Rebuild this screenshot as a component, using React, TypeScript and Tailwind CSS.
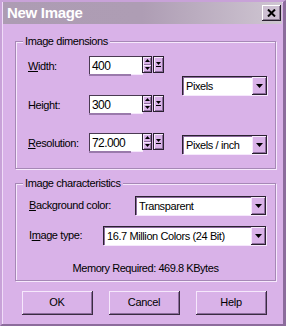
import React from "react";

const font = "font-['Liberation_Sans',Arial,sans-serif]";

function Arrow({ up = false }: { up?: boolean }) {
  return (
    <svg width="5" height="3" viewBox="0 0 5 3" className="block">
      {up ? <path d="M2.5 0 L5 3 L0 3 Z" fill="#000" /> : <path d="M0 0 L5 0 L2.5 3 Z" fill="#000" />}
    </svg>
  );
}

function Spinner({ value }: { value: string }) {
  return (
    <div className="flex items-start h-[20px]">
      <div className="flex flex-col w-[53px]">
        <div className="h-[18px] bg-white border-t border-l border-[#4a3a52] border-r-0 border-b-0 shadow-[1px_1px_0_#f6e8fc] flex items-center pl-[2px] text-[12px] tracking-[-0.6px] text-black">
          {value}
        </div>
        <div className="h-[2px] w-[42px] bg-[#9a7aab]" />
      </div>
      <div className="flex flex-col w-[10px] h-[17px] border border-[#2a2030]">
        <div className="flex-1 flex items-center justify-center bg-[#d9b2e8] shadow-[inset_1px_1px_0_#f6e8fc,inset_-1px_-1px_0_#8c6c9c]">
          <Arrow up />
        </div>
        <div className="flex-1 flex items-center justify-center bg-[#d9b2e8] shadow-[inset_1px_1px_0_#f6e8fc,inset_-1px_-1px_0_#8c6c9c]">
          <Arrow />
        </div>
      </div>
      <div className="w-[11px] h-[17px] ml-[1px] border border-[#2a2030] bg-[#d9b2e8] shadow-[inset_1px_1px_0_#f6e8fc,inset_-1px_-1px_0_#8c6c9c] flex flex-col items-center justify-center gap-[1px]">
        <Arrow />
        <div className="w-[5px] h-[1px] bg-black" />
      </div>
    </div>
  );
}

function Select({ value, width }: { value: string; width: string }) {
  return (
    <div
      className={`${width} h-[19px] bg-white border-t border-l border-[#2a2030] shadow-[1px_1px_0_#f6e8fc,inset_1px_1px_0_#8c6c9c] flex items-stretch`}
    >
      <div className="flex-1 flex items-center pl-[3px] text-[11px] tracking-[-0.4px] text-black">{value}</div>
      <div className="w-[15px] bg-[#d9b2e8] border-r border-b border-[#2a2030] shadow-[inset_1px_1px_0_#f6e8fc,inset_-1px_-1px_0_#8c6c9c] flex items-center justify-center">
        <svg width="7" height="4" viewBox="0 0 7 4">
          <path d="M0 0 L7 0 L3.5 4 Z" fill="#000" />
        </svg>
      </div>
    </div>
  );
}

function Label({ pre = "", hot = "", rest, width }: { pre?: string; hot?: string; rest: string; width: string }) {
  return (
    <div className={`${width} text-[11px] tracking-[-0.4px] text-black`}>
      {pre}
      {hot && <span className="underline underline-offset-[1px]">{hot}</span>}
      {rest}
    </div>
  );
}

function Group({ title, height, children }: { title: string; height: string; children: React.ReactNode }) {
  return (
    <div
      className={`relative ml-[15px] w-[261px] ${height} border border-[#a688b6] shadow-[inset_1px_1px_0_#f6e8fc,1px_1px_0_#f6e8fc]`}
    >
      <span className="absolute -top-[7px] left-[7px] px-[2px] bg-[#d9b2e8] text-[11px] leading-[13px] tracking-[-0.4px] text-black">
        {title}
      </span>
      {children}
    </div>
  );
}

function Button({ label }: { label: string }) {
  return (
    <div className="w-[71px] h-[24px] border-r border-b border-[#3a2c42] bg-[#d9b2e8] shadow-[inset_1px_1px_0_#f6e8fc,inset_-1px_-1px_0_#8c6c9c] flex items-center justify-center text-[11px] tracking-[-0.3px] text-black">
      {label}
    </div>
  );
}

export default function App() {
  return (
    <div
      className={`${font} w-[286px] h-[326px] bg-[#d9b2e8] border-l-[2px] border-t-[2px] border-r-[3px] border-b-[2px] border-l-[#c8a2d8] border-t-[#c8a2d8] border-r-[#8c6c9c] border-b-[#8c6c9c] shadow-[inset_1px_1px_0_#f0dcf8] flex flex-col select-none`}
    >
      {/* Title bar */}
      <div className="mx-[1px] h-[22px] flex items-center justify-between bg-gradient-to-r from-[#ad9cb3] via-[#ae9db4] to-[#cfc6d2]">
        <span className="pl-[4px] text-[15px] font-bold text-white tracking-[-0.3px]">New Image</span>
        <div className="mr-[1px] w-[19px] h-[16px] bg-[#cdbfd2] border-r border-b border-[#2a2030] shadow-[inset_1px_1px_0_#ffffff,inset_-1px_-1px_0_#8c7c94] flex items-center justify-center">
          <svg width="9" height="8" viewBox="0 0 9 8">
            <path d="M1 0.5 L8 7.5 M8 0.5 L1 7.5" stroke="#000" strokeWidth="2" />
          </svg>
        </div>
      </div>

      {/* Image dimensions */}
      <div className="mt-[17px] -ml-[2px]">
        <Group title="Image dimensions" height="h-[128px]">
          <div className="flex pt-[14px] pl-[12px]">
            <div className="flex flex-col gap-[19px]">
              <div className="flex items-center h-[20px]">
                <Label hot="W" rest="idth:" width="w-[61px]" />
                <Spinner value="400" />
              </div>
              <div className="flex items-center h-[20px]">
                <Label rest="Height:" width="w-[61px]" />
                <Spinner value="300" />
              </div>
              <div className="flex items-center h-[20px] -mt-[1px]">
                <Label hot="R" rest="esolution:" width="w-[61px]" />
                <Spinner value="72.000" />
              </div>
            </div>
            <div className="flex flex-col ml-[18px] pt-[20px] gap-[40px]">
              <Select value="Pixels" width="w-[85px]" />
              <Select value="Pixels / inch" width="w-[85px]" />
            </div>
          </div>
        </Group>
      </div>

      {/* Image characteristics */}
      <div className="mt-[14px] -ml-[2px]">
        <Group title="Image characteristics" height="h-[98px]">
          <div className="flex flex-col pt-[12px] pl-[13px]">
            <div className="flex items-center h-[19px]">
              <Label hot="B" rest="ackground color:" width="w-[106px]" />
              <Select value="Transparent" width="w-[131px]" />
            </div>
            <div className="flex items-center h-[19px] mt-[11px]">
              <Label pre="I" hot="m" rest="age type:" width="w-[74px]" />
              <Select value="16.7 Million Colors (24 Bit)" width="w-[163px]" />
            </div>
            <div className="mt-[15px] pr-[13px] text-center text-[11px] tracking-[-0.45px] text-black">
              Memory Required: 469.8 KBytes
            </div>
          </div>
        </Group>
      </div>

      {/* Buttons */}
      <div className="mt-[10px] ml-[20px] flex gap-[16px]">
        <Button label="OK" />
        <Button label="Cancel" />
        <Button label="Help" />
      </div>
    </div>
  );
}
